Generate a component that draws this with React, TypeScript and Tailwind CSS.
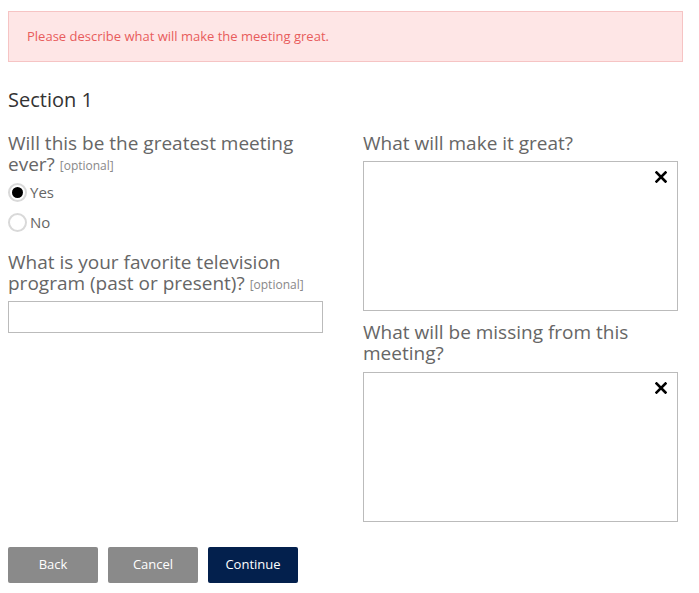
import React, { useState } from "react"

const font = { fontFamily: '"Open Sans", "Noto Sans", sans-serif' }

function CloseIcon() {
  return (
    <svg width="12" height="12" viewBox="0 0 12 12" className="absolute right-[10px] top-[9px]">
      <path d="M1.5 1.5 L10.5 10.5 M10.5 1.5 L1.5 10.5" stroke="#000" strokeWidth="2.6" strokeLinecap="square" />
    </svg>
  )
}

function Radio({ label, checked, onClick }: { label: string; checked: boolean; onClick: () => void }) {
  return (
    <label className="flex h-[30px] items-center cursor-pointer" onClick={onClick}>
      <span className="flex h-[19px] w-[19px] items-center justify-center rounded-full border-2 border-[#d9d9d9] bg-white">
        {checked && <span className="h-[11px] w-[11px] rounded-full bg-black" />}
      </span>
      <span className="ml-[3px] text-[15px] text-[#666]">{label}</span>
    </label>
  )
}

function Optional() {
  return <span className="relative -top-[1px] text-[12px] leading-[14px] text-[#888]">[optional]</span>
}

export default function App() {
  const [answer, setAnswer] = useState("yes")

  return (
    <div className="min-h-[593px] bg-white px-[8px] pt-[11px]" style={font}>
      <div className="flex h-[51px] w-[675px] items-center border border-[#f6c4c4] bg-[#fee6e6] pl-[18px] text-[13px] text-[#e85c5c]">
        Please describe what will make the meeting great.
      </div>

      <h2 className="mt-[24px] text-[20px] leading-[28px] text-[#333]">Section 1</h2>

      <div className="mt-[19px] grid grid-cols-[315px_315px] gap-x-[40px]">
        <div>
          <div className="text-[19px] leading-[21px] text-[#666]">
            Will this be the greatest meeting ever? <Optional />
          </div>
          <div className="mt-[2px]">
            <Radio label="Yes" checked={answer === "yes"} onClick={() => setAnswer("yes")} />
            <Radio label="No" checked={answer === "no"} onClick={() => setAnswer("no")} />
          </div>
          <div className="mt-[15px] text-[19px] leading-[21px] text-[#666]">
            What is your favorite television program (past or present)? <Optional />
          </div>
          <input className="mt-[7px] block h-[32px] w-[315px] border border-[#bbb] px-2 outline-none" />
        </div>

        <div>
          <div className="text-[19px] leading-[21px] text-[#666]">What will make it great?</div>
          <div className="relative mt-[7px] h-[150px] w-[315px] border border-[#bbb]">
            <CloseIcon />
          </div>
          <div className="mt-[11px] text-[19px] leading-[21px] text-[#666]">
            What will be missing from this meeting?
          </div>
          <div className="relative mt-[8px] h-[150px] w-[315px] border border-[#bbb]">
            <CloseIcon />
          </div>
        </div>
      </div>

      <div className="mt-[25px] flex gap-[10px]">
        <button className="h-[36px] w-[90px] rounded-[2px] bg-[#8a8a8a] text-[13px] text-white">Back</button>
        <button className="h-[36px] w-[90px] rounded-[2px] bg-[#8a8a8a] text-[13px] text-white">Cancel</button>
        <button className="h-[36px] w-[90px] rounded-[2px] bg-[#03204d] text-[13px] text-white">Continue</button>
      </div>
    </div>
  )
}
